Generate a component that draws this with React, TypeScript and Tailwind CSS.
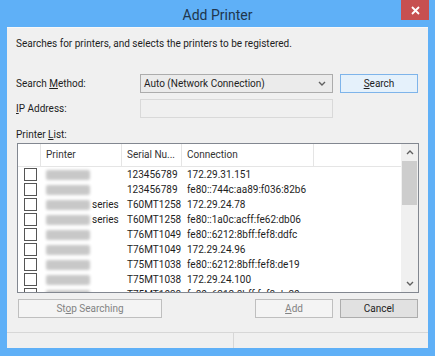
import React from 'react';

const rows = [
  { name: '', serial: '123456789', conn: '172.29.31.151' },
  { name: '', serial: '123456789', conn: 'fe80::744c:aa89:f036:82b6' },
  { name: 'series', serial: 'T60MT1258', conn: '172.29.24.78' },
  { name: 'series', serial: 'T60MT1258', conn: 'fe80::1a0c:acff:fe62:db06' },
  { name: '', serial: 'T76MT1049', conn: 'fe80::6212:8bff:fef8:ddfc' },
  { name: '', serial: 'T76MT1049', conn: '172.29.24.96' },
  { name: '', serial: 'T75MT1038', conn: 'fe80::6212:8bff:fef8:de19' },
  { name: '', serial: 'T75MT1038', conn: '172.29.24.100' },
  { name: '', serial: 'T75MT1038', conn: 'fe80::6212:8bff:fef8:de20' },
];

const Chevron = ({ up = false }: { up?: boolean }) => (
  <svg width="8" height="5" viewBox="0 0 8 5" className={up ? 'rotate-180' : ''}>
    <path d="M1 1 L4 4 L7 1" fill="none" stroke="#606060" strokeWidth="1.4" />
  </svg>
);

const App = () => {
  return (
    <div
      className="w-[435px] h-[356px] bg-[#5fb0f7] flex flex-col text-[10px] text-[#1e1e1e] overflow-hidden"
      style={{ fontFamily: 'Roboto, "Noto Sans", sans-serif' }}
    >
      {/* Title bar */}
      <div className="relative h-[27px] shrink-0 flex items-center justify-center">
        <span className="text-[14px] text-[#20364d] leading-none mt-[3px]">Add Printer</span>
        <div className="absolute right-[6px] top-0 w-[28px] h-[20px] bg-[#c75050] flex items-center justify-center">
          <svg width="9" height="9" viewBox="0 0 9 9">
            <path d="M1 1 L8 8 M8 1 L1 8" stroke="#fff" strokeWidth="1.8" />
          </svg>
        </div>
      </div>

      {/* Client area */}
      <div className="mx-[7px] mb-[8px] flex-1 bg-[#f0f0f0] border-t border-[#f8f8f8] flex flex-col">
        <div className="pl-[9px] pr-[10px] flex flex-col flex-1">
          <div className="h-[16px] mt-[8px] leading-[16px] whitespace-nowrap">
            Searches for printers, and selects the printers to be registered.
          </div>

          {/* Search method */}
          <div className="mt-[22px] flex items-center h-[19px]">
            <div className="w-[124px] shrink-0">
              Search <span className="underline">M</span>ethod:
            </div>
            <div className="w-[193px] shrink-0 h-[19px] border border-[#acacac] bg-[#ebebeb] flex items-center justify-between pl-[3px] pr-[6px]">
              <span>Auto (Network Connection)</span>
              <Chevron />
            </div>
            <div className="ml-[7px] w-[78px] shrink-0 h-[19px] border border-[#7eb4ea] bg-[#e5f1fb] flex items-center justify-center">
              <span>
                <span className="underline">S</span>earch
              </span>
            </div>
          </div>

          {/* IP Address */}
          <div className="mt-[6px] flex items-center h-[19px]">
            <div className="w-[124px] shrink-0">
              <span className="underline">I</span>P Address:
            </div>
            <div className="w-[193px] h-[19px] border border-[#d9d9d9] bg-[#f0f0f0]" />
          </div>

          {/* Printer list */}
          <div className="mt-[9px] h-[16px] leading-[16px]">
            Printer <span className="underline">L</span>ist:
          </div>
          <div className="ml-[1px] w-[402px] h-[150px] border border-[#828790] bg-white flex">
            <div className="flex-1 min-w-0 flex flex-col overflow-hidden">
              {/* header */}
              <div className="h-[23px] shrink-0 flex border-b border-[#e5e5e5] text-[#333] whitespace-nowrap">
                <div className="w-[23px] shrink-0 border-r border-[#e5e5e5]" />
                <div className="w-[81px] shrink-0 border-r border-[#e5e5e5] pl-[5px] leading-[22px]">Printer</div>
                <div className="w-[60px] shrink-0 overflow-hidden border-r border-[#e5e5e5] pl-[5px] leading-[22px]">Serial Nu...</div>
                <div className="w-[132px] shrink-0 border-r border-[#e5e5e5] pl-[5px] leading-[22px]">Connection</div>
                <div className="flex-1" />
              </div>
              {rows.map((r, i) => (
                <div key={i} className="h-[15px] shrink-0 flex items-center whitespace-nowrap">
                  <div className="w-[23px] shrink-0 flex justify-center pl-[1px]">
                    <div className="w-[13px] h-[13px] border border-[#555] bg-white" />
                  </div>
                  <div className="w-[81px] shrink-0 pl-[5px] flex items-center">
                    <span className="w-[44px] shrink-0 h-[10px] rounded-[2px] bg-[#c8c8c8] blur-[1.5px]" />
                    {r.name && <span className="ml-[2px]">{r.name}</span>}
                  </div>
                  <div className="w-[60px] shrink-0 pl-[5px]">{r.serial}</div>
                  <div className="w-[132px] shrink-0 pl-[5px]">{r.conn}</div>
                </div>
              ))}
            </div>
            {/* scrollbar */}
            <div className="w-[17px] shrink-0 bg-[#f0f0f0] flex flex-col">
              <div className="h-[17px] flex items-center justify-center">
                <Chevron up />
              </div>
              <div className="h-[44px] mx-[1px] bg-[#cdcdcd]" />
              <div className="flex-1" />
              <div className="h-[17px] flex items-center justify-center">
                <Chevron />
              </div>
            </div>
          </div>

          {/* buttons */}
          <div className="mt-[6px] flex items-center h-[19px]">
            <div className="ml-[2px] w-[144px] h-[19px] border border-[#bfbfbf] bg-[#f4f4f4] text-[#838383] flex items-center justify-center">
              <span>
                St<span className="underline">o</span>p Searching
              </span>
            </div>
            <div className="ml-auto w-[78px] h-[19px] border border-[#bfbfbf] bg-[#f4f4f4] text-[#838383] flex items-center justify-center">
              <span>
                <span className="underline">A</span>dd
              </span>
            </div>
            <div className="ml-[7px] w-[78px] h-[19px] border border-[#adadad] bg-[#e1e1e1] flex items-center justify-center">
              Cancel
            </div>
          </div>
        </div>

        {/* status bar */}
        <div className="h-[16px] mt-[12px] border-t border-[#d7d7d7] flex">
          <div className="w-[227px] border-r border-[#d7d7d7]" />
          <div className="flex-1" />
        </div>
      </div>
    </div>
  );
};

export default App;
